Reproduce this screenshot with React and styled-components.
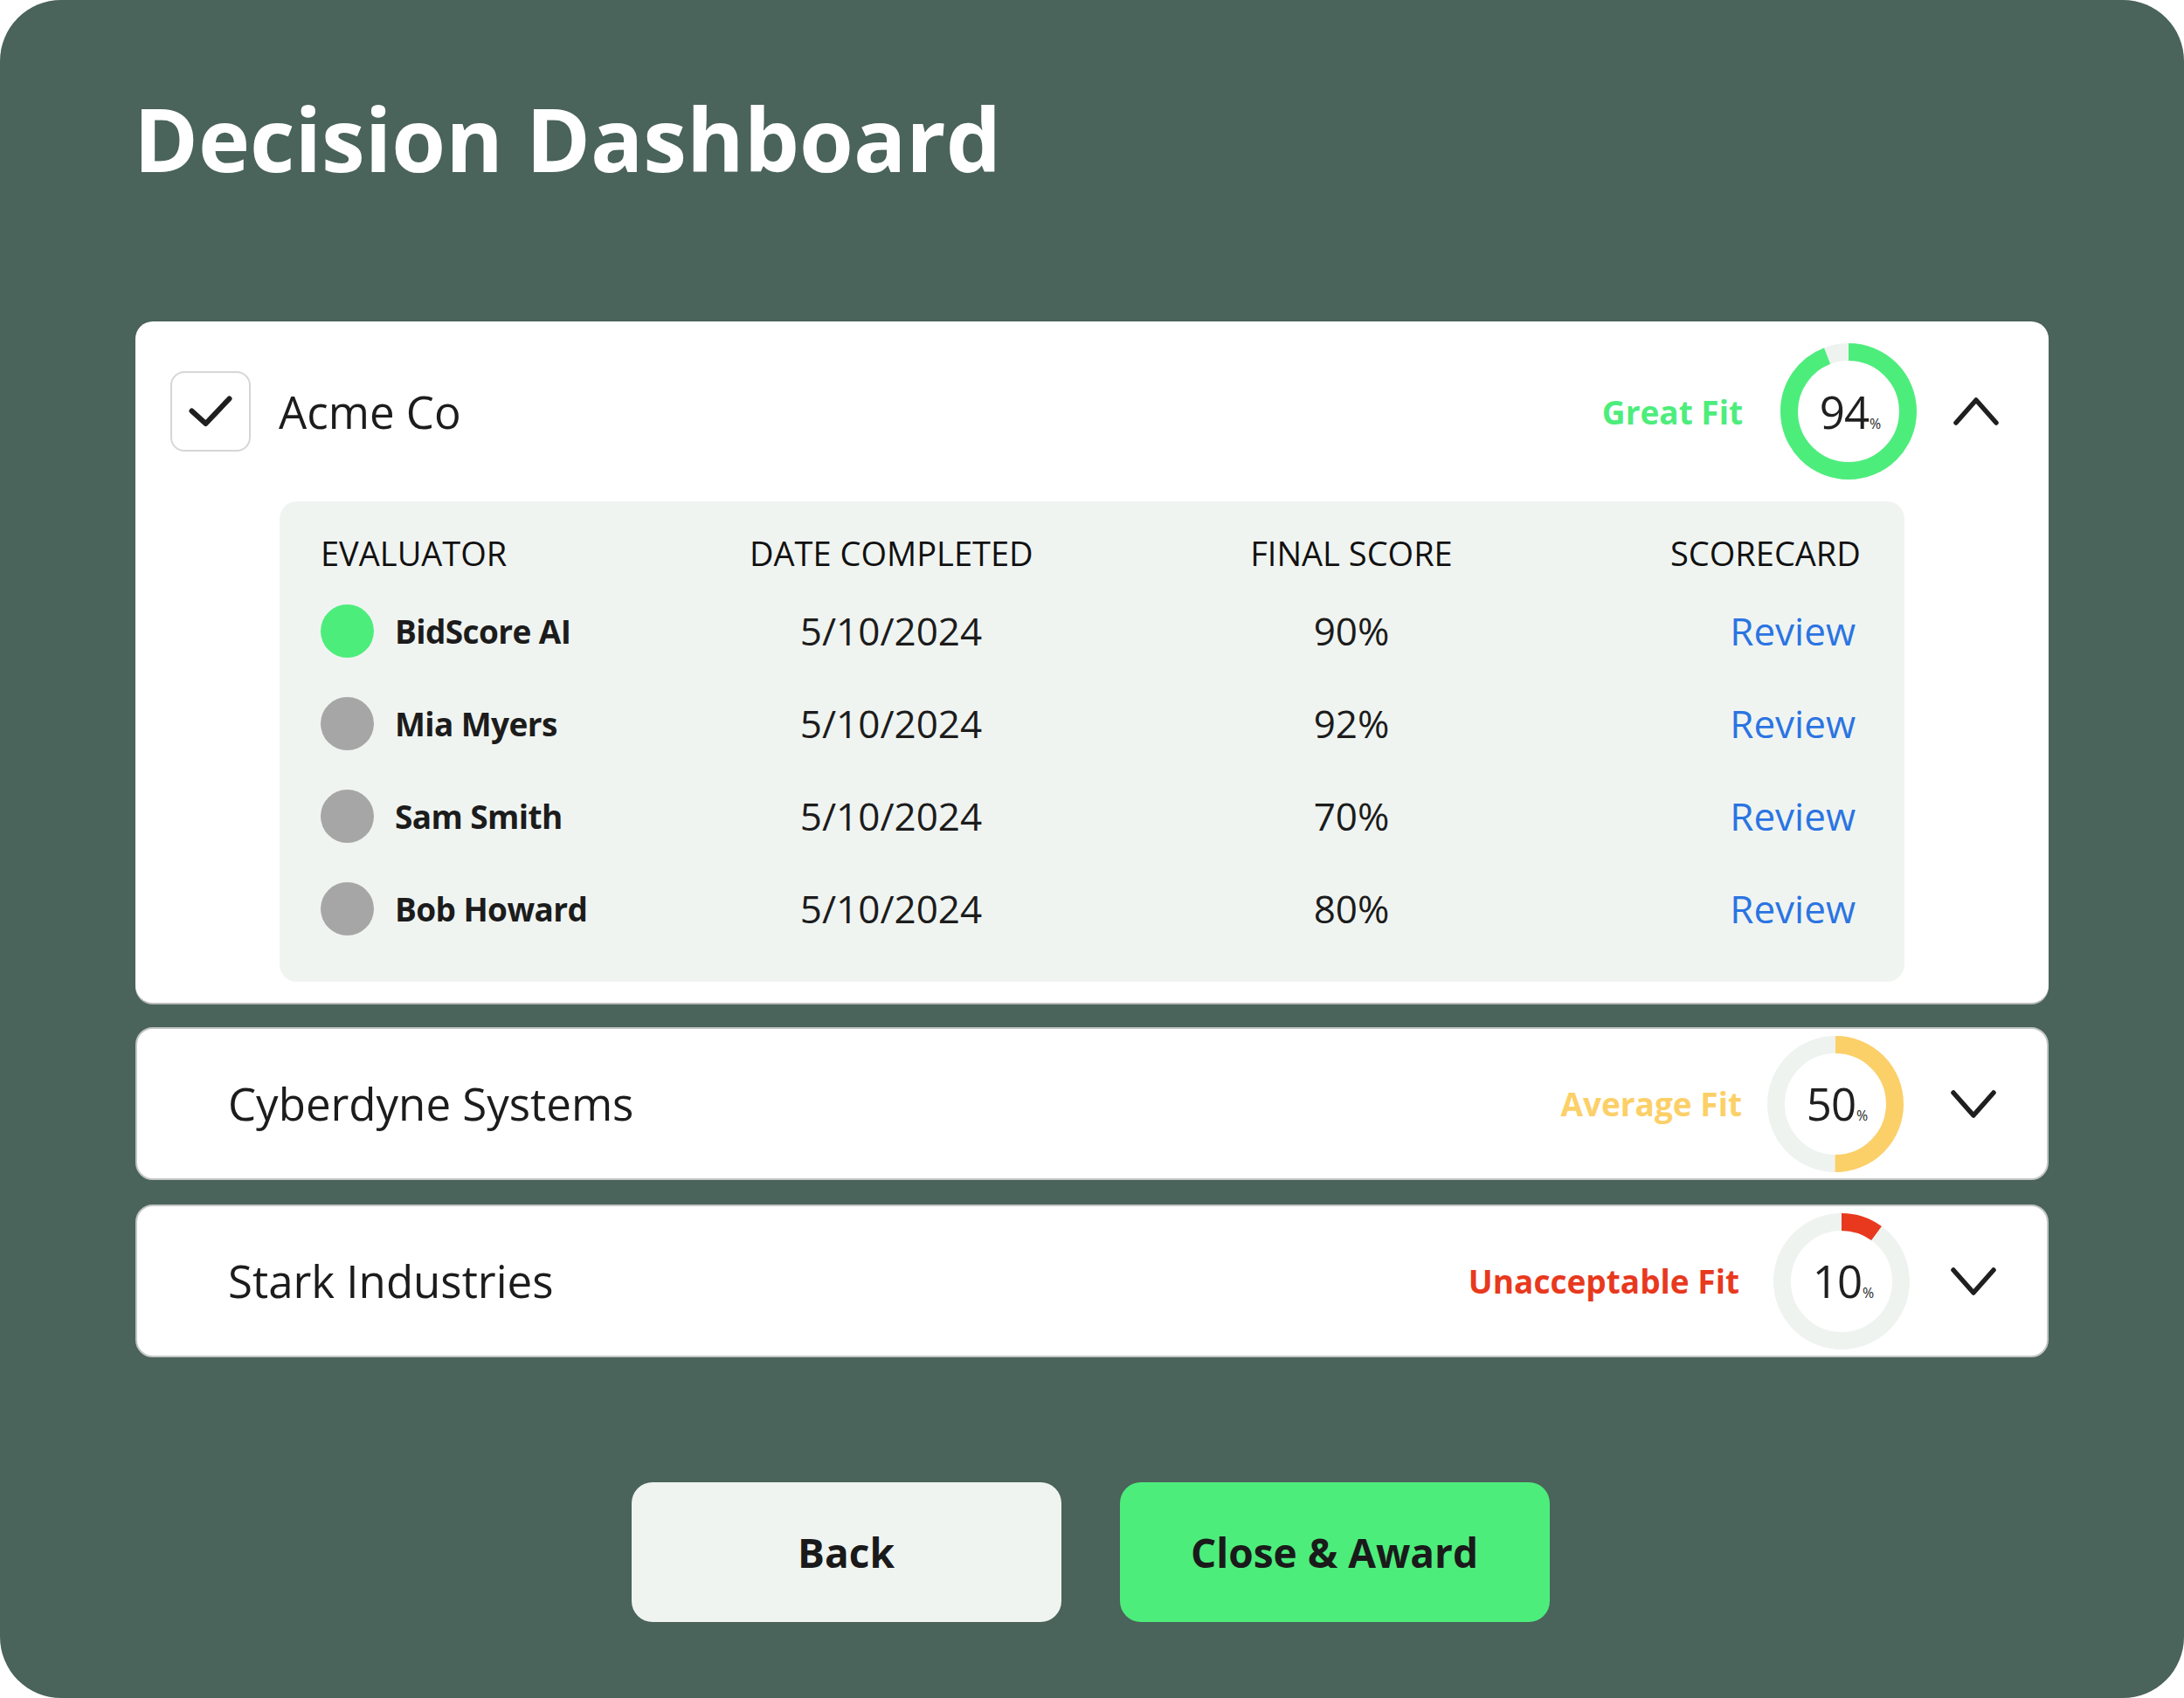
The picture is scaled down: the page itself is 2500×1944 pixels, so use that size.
import React from "react";
import styled, { createGlobalStyle } from "styled-components";

const GlobalStyle = createGlobalStyle`
  html, body { margin: 0; padding: 0; background: #ffffff; }
  * { box-sizing: border-box; }
  body { font-family: "Open Sans", "Noto Sans", sans-serif; }
`;

const Frame = styled.div`
  width: 2500px;
  height: 1944px;
  background: #4a635b;
  border-radius: 70px;
  padding: 108px 155px 0;
  display: flex;
  flex-direction: column;
`;

const Title = styled.h1`
  margin: 0 0 0 -2px;
  font-size: 100px;
  line-height: 100px;
  font-weight: 700;
  color: #ffffff;
  letter-spacing: 0;
`;

const CardList = styled.div`
  margin-top: 160px;
  display: flex;
  flex-direction: column;
  gap: 28px;
`;

const Card = styled.section`
  background: #ffffff;
  border-radius: 20px;
  border: ${(p) => (p.$expanded ? "none" : "2px solid #c3c7c4")};
  box-shadow: ${(p) => (p.$expanded ? "0 2px 0 #b9bdba" : "none")};
  padding-bottom: ${(p) => (p.$expanded ? "24px" : "0")};
`;

const CardHeader = styled.div`
  height: ${(p) => (p.$expanded ? "206px" : "171px")};
  display: flex;
  align-items: center;
  padding: 0 ${(p) => p.$right}px 0 ${(p) => (p.$expanded ? "40px" : "104px")};
`;

const CheckBox = styled.div`
  width: 92px;
  height: 92px;
  border: 2px solid #d6d6d6;
  border-radius: 16px;
  display: flex;
  align-items: center;
  justify-content: center;
  margin-right: 32px;
  flex-shrink: 0;
`;

const CompanyName = styled.h2`
  margin: 0;
  font-size: 51px;
  line-height: 1;
  font-weight: 400;
  color: #1c1c1c;
  flex: 1;
`;

const FitLabel = styled.span`
  font-size: 37px;
  line-height: 1;
  font-weight: 700;
  color: ${(p) => p.$color};
  margin-right: ${(p) => p.$gap}px;
`;

const DonutWrap = styled.div`
  display: grid;
  width: 156px;
  height: 156px;
  flex-shrink: 0;
  & > * { grid-area: 1 / 1; }
`;

const DonutLabel = styled.div`
  display: flex;
  align-items: baseline;
  justify-content: center;
  align-self: center;
  justify-self: center;
  color: #1f1f1f;
  padding-left: 4px;
`;

const DonutNumber = styled.span`
  font-size: 51px;
  line-height: 1;
  font-weight: 400;
  letter-spacing: -1px;
`;

const DonutPercent = styled.span`
  font-size: 16px;
  line-height: 1;
  font-weight: 400;
  margin-left: 1px;
`;

const ChevronButton = styled.button`
  border: none;
  background: none;
  padding: 0;
  margin-left: ${(p) => p.$gap}px;
  display: flex;
  align-items: center;
  color: #1f1f1f;
  cursor: pointer;
`;

const Panel = styled.div`
  margin: 0 165px;
  height: 550px;
  background: #f0f4f1;
  border-radius: 20px;
  padding: 23px 56px 31px 47px;
`;

const Row = styled.div`
  display: grid;
  grid-template-columns: 491px 324px 730px 1fr;
  align-items: center;
  height: ${(p) => (p.$head ? "72px" : "106px")};
`;

const HeadCell = styled.div`
  font-size: 38px;
  line-height: 1;
  font-weight: 500;
  color: #111111;
  text-align: ${(p) => p.$align || "left"};
  white-space: nowrap;
`;

const Evaluator = styled.div`
  display: flex;
  align-items: center;
  gap: 24px;
`;

const Avatar = styled.div`
  width: 61px;
  height: 61px;
  border-radius: 50%;
  background: ${(p) => (p.$ai ? "#4ded7c" : "#a6a6a6")};
  flex-shrink: 0;
`;

const EvalName = styled.span`
  font-size: 37px;
  line-height: 1;
  font-weight: 700;
  letter-spacing: -0.6px;
  color: #1c1c1c;
  white-space: nowrap;
`;

const Cell = styled.div`
  font-size: 44px;
  line-height: 1;
  font-weight: 400;
  color: #1c1c1c;
  text-align: ${(p) => p.$align || "left"};
`;

const ReviewLink = styled.a`
  font-size: 44px;
  line-height: 1;
  font-weight: 400;
  color: #2b74e2;
  text-decoration: none;
  text-align: right;
  cursor: pointer;
`;

const Actions = styled.div`
  margin-top: 143px;
  display: flex;
  justify-content: center;
  gap: 67px;
  padding-right: 4px;
`;

const ActionButton = styled.button`
  width: 492px;
  height: 160px;
  border: none;
  border-radius: 24px;
  background: ${(p) => (p.$primary ? "#4ded7c" : "#eff4f0")};
  font-family: "Open Sans", "Noto Sans", sans-serif;
  font-size: 46px;
  font-weight: 700;
  color: #1a1a1a;
  cursor: pointer;
`;

const companies = [
  {
    name: "Acme Co",
    fit: "Great Fit",
    color: "#4ded7c",
    score: 94,
    expanded: true,
    labelGap: 43,
    chevronGap: 42,
    right: 57,
  },
  {
    name: "Cyberdyne Systems",
    fit: "Average Fit",
    color: "#fcd068",
    score: 50,
    expanded: false,
    labelGap: 29,
    chevronGap: 54,
    right: 58,
  },
  {
    name: "Stark Industries",
    fit: "Unacceptable Fit",
    color: "#e8391e",
    score: 10,
    expanded: false,
    labelGap: 39,
    chevronGap: 47,
    right: 58,
  },
];

const evaluations = [
  { name: "BidScore AI", ai: true, date: "5/10/2024", score: "90%" },
  { name: "Mia Myers", date: "5/10/2024", score: "92%" },
  { name: "Sam Smith", date: "5/10/2024", score: "70%" },
  { name: "Bob Howard", date: "5/10/2024", score: "80%" },
];

function CheckIcon() {
  return (
    <svg width="50" height="36" viewBox="0 0 50 36" fill="none">
      <polyline
        points="3.5,17.5 19.5,32 46.5,3.5"
        stroke="#1f1f1f"
        strokeWidth="6"
        strokeLinecap="round"
        strokeLinejoin="round"
      />
    </svg>
  );
}

function Chevron({ up }) {
  return (
    <svg width="52" height="32" viewBox="0 0 52 32" fill="none">
      <polyline
        points={up ? "3,29 26,3 49,29" : "3,3 26,29 49,3"}
        stroke="currentColor"
        strokeWidth="5.5"
        strokeLinecap="round"
        strokeLinejoin="round"
      />
    </svg>
  );
}

function Donut({ value, color }) {
  const r = 68;
  const c = 2 * Math.PI * r;
  return (
    <DonutWrap>
      <svg width="156" height="156" viewBox="0 0 156 156">
        <circle cx="78" cy="78" r={r} fill="none" stroke="#eff3f0" strokeWidth="20" />
        <circle
          cx="78"
          cy="78"
          r={r}
          fill="none"
          stroke={color}
          strokeWidth="20"
          strokeDasharray={`${(c * value) / 100} ${c}`}
          transform="rotate(-90 78 78)"
        />
      </svg>
      <DonutLabel>
        <DonutNumber>{value}</DonutNumber>
        <DonutPercent>%</DonutPercent>
      </DonutLabel>
    </DonutWrap>
  );
}

function EvaluationTable() {
  return (
    <Panel>
      <Row $head>
        <HeadCell>EVALUATOR</HeadCell>
        <HeadCell $align="center">DATE COMPLETED</HeadCell>
        <HeadCell $align="center">FINAL SCORE</HeadCell>
        <HeadCell $align="right">SCORECARD</HeadCell>
      </Row>
      {evaluations.map((e) => (
        <Row key={e.name}>
          <Evaluator>
            <Avatar $ai={e.ai} />
            <EvalName>{e.name}</EvalName>
          </Evaluator>
          <Cell $align="center">{e.date}</Cell>
          <Cell $align="center">{e.score}</Cell>
          <ReviewLink>Review</ReviewLink>
        </Row>
      ))}
    </Panel>
  );
}

function CompanyCard({ company }) {
  return (
    <Card $expanded={company.expanded}>
      <CardHeader $expanded={company.expanded} $right={company.right}>
        {company.expanded && (
          <CheckBox>
            <CheckIcon />
          </CheckBox>
        )}
        <CompanyName>{company.name}</CompanyName>
        <FitLabel $color={company.color} $gap={company.labelGap}>
          {company.fit}
        </FitLabel>
        <Donut value={company.score} color={company.color} />
        <ChevronButton $gap={company.chevronGap}>
          <Chevron up={company.expanded} />
        </ChevronButton>
      </CardHeader>
      {company.expanded && <EvaluationTable />}
    </Card>
  );
}

export default function App() {
  return (
    <>
      <GlobalStyle />
      <Frame>
        <Title>Decision Dashboard</Title>
        <CardList>
          {companies.map((c) => (
            <CompanyCard key={c.name} company={c} />
          ))}
        </CardList>
        <Actions>
          <ActionButton>Back</ActionButton>
          <ActionButton $primary>Close &amp; Award</ActionButton>
        </Actions>
      </Frame>
    </>
  );
}
